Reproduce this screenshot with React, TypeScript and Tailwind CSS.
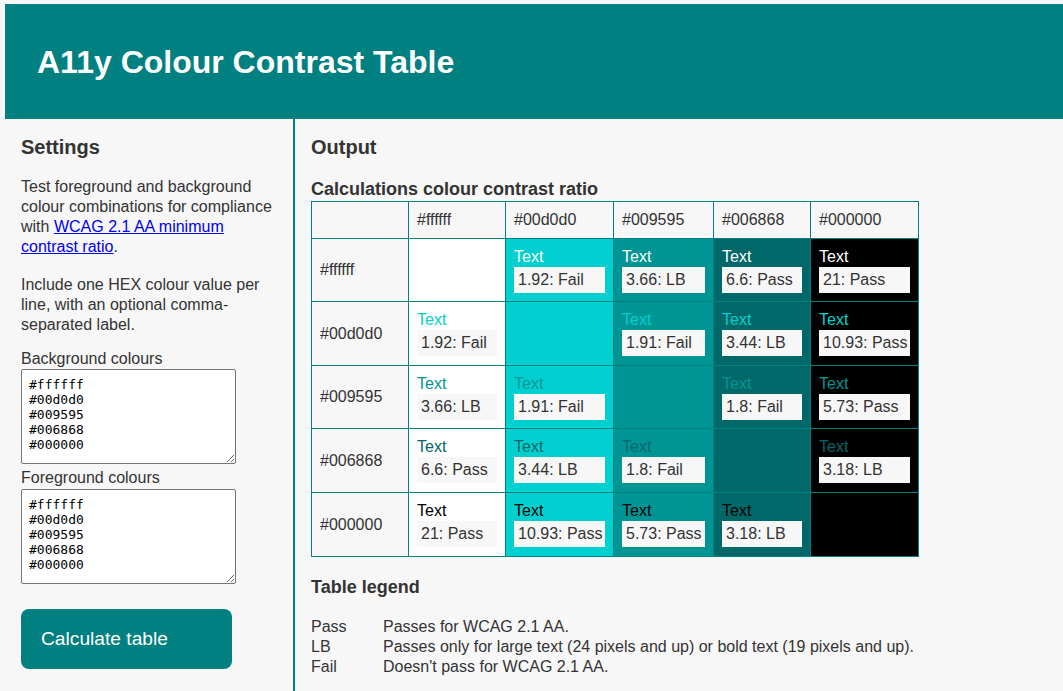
import React from "react";

const colours = ["#ffffff", "#00d0d0", "#009595", "#006868", "#000000"];

const results: (string | null)[][] = [
  [null, "1.92: Fail", "3.66: LB", "6.6: Pass", "21: Pass"],
  ["1.92: Fail", null, "1.91: Fail", "3.44: LB", "10.93: Pass"],
  ["3.66: LB", "1.91: Fail", null, "1.8: Fail", "5.73: Pass"],
  ["6.6: Pass", "3.44: LB", "1.8: Fail", null, "3.18: LB"],
  ["21: Pass", "10.93: Pass", "5.73: Pass", "3.18: LB", null],
];

const font = { fontFamily: '"Liberation Sans", Arial, Helvetica, sans-serif' };

export default function App() {
  return (
    <div
      className="min-h-screen bg-[#f7f7f7] pt-[4px] pl-[5px] text-[#333333] flex flex-col"
      style={font}
    >
      <header className="bg-[#008080] h-[115px] pl-8 flex items-center">
        <h1 className="text-white font-bold text-[32px] leading-[38px] pt-[1px]">
          A11y Colour Contrast Table
        </h1>
      </header>
      <div className="flex flex-1">
        <aside className="w-[290px] shrink-0 border-r-2 border-[#008080] pl-4 pr-4 pt-4">
          <h2 className="text-[20px] leading-[24px] font-bold">Settings</h2>
          <p className="mt-[18px] text-[16px] leading-[20px]">
            Test foreground and background colour combinations for compliance with{" "}
            <a href="#" className="text-[#0000ee] underline">
              WCAG 2.1 AA minimum contrast ratio
            </a>
            .
          </p>
          <p className="mt-[18px] text-[16px] leading-[20px]">
            Include one HEX colour value per line, with an optional comma-separated label.
          </p>
          <label className="block mt-[14px] text-[16px] leading-[20px]">Background colours</label>
          <textarea
            className="block w-[215px] h-[95px] bg-white border border-[#767676] rounded-[2px] px-[7px] py-[7px] text-[13px] leading-[15px] text-black"
            style={{ fontFamily: '"DejaVu Sans Mono", monospace' }}
            defaultValue={colours.join("\n")}
          />
          <label className="block mt-[4px] text-[16px] leading-[20px]">Foreground colours</label>
          <textarea
            className="block mt-[1px] w-[215px] h-[95px] bg-white border border-[#767676] rounded-[2px] px-[7px] py-[7px] text-[13px] leading-[15px] text-black"
            style={{ fontFamily: '"DejaVu Sans Mono", monospace' }}
            defaultValue={colours.join("\n")}
          />
          <button className="mt-[25px] w-[211px] h-[60px] rounded-[8px] bg-[#008080] text-white text-[19.2px] text-left pl-5 flex items-center">
            Calculate table
          </button>
        </aside>
        <main className="flex-1 pl-4 pt-4">
          <h2 className="text-[20px] leading-[24px] font-bold">Output</h2>
          <h3 className="mt-[20px] text-[18px] leading-[21px] font-bold">
            Calculations colour contrast ratio
          </h3>
          <div className="mt-[1px] inline-grid grid-cols-[96px_96px_107px_99px_96px_107px] grid-rows-[36px_62px_63px_62px_63px_63px] gap-px p-px bg-[#008080] text-[16px]">
            <div className="bg-[#f7f7f7]" />
            {colours.map((c) => (
              <div key={"h" + c} className="bg-[#f7f7f7] flex items-center pl-2">
                {c}
              </div>
            ))}
            {colours.map((fg, r) => (
              <React.Fragment key={"r" + fg}>
                <div className="bg-[#f7f7f7] flex items-center pl-2">{fg}</div>
                {colours.map((bg, c) => {
                  const res = results[r][c];
                  return (
                    <div
                      key={fg + bg}
                      className="pt-[8px] px-2"
                      style={{ backgroundColor: bg }}
                    >
                      {res && (
                        <>
                          <div className="leading-[20px]" style={{ color: fg }}>
                            Text
                          </div>
                          <div className="bg-[#f7f7f7] text-[#333333] leading-[20px] py-[3px] pl-[4px] whitespace-nowrap">
                            {res}
                          </div>
                        </>
                      )}
                    </div>
                  );
                })}
              </React.Fragment>
            ))}
          </div>
          <h3 className="mt-[20px] text-[18px] leading-[21px] font-bold">Table legend</h3>
          <div className="mt-[19px] grid grid-cols-[72px_1fr] text-[16px] leading-[20px]">
            <div>Pass</div>
            <div>Passes for WCAG 2.1 AA.</div>
            <div>LB</div>
            <div>Passes only for large text (24 pixels and up) or bold text (19 pixels and up).</div>
            <div>Fail</div>
            <div>Doesn't pass for WCAG 2.1 AA.</div>
          </div>
        </main>
      </div>
    </div>
  );
}
